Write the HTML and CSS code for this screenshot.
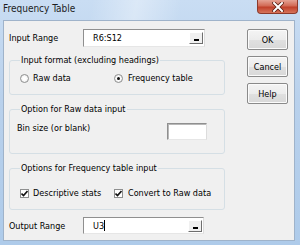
FILE: index.html
```html
<!DOCTYPE html>
<html lang="en">
<head>
    <meta charset="UTF-8">
    <title>Frequency Table</title>
    <link rel="stylesheet" href="styles.css">
</head>
<body>
    <div class="window">
        <div class="titlebar">
            <span class="title">Frequency Table</span>
            <button class="close-btn">
                <svg width="12" height="10" viewBox="0 0 12 10">
                    <path d="M2 1 L10 9 M10 1 L2 9" stroke="#5a1d12" stroke-width="3.6" stroke-linecap="square"/>
                    <path d="M2 1 L10 9 M10 1 L2 9" stroke="#ffffff" stroke-width="2" stroke-linecap="square"/>
                </svg>
            </button>
        </div>

        <div class="client">
            <div class="form">
                <div class="field-row">
                    <span class="field-label">Input Range</span>
                    <div class="ref-box">
                        <span class="ref-text">R6:S12</span>
                        <span class="ref-btn"><span class="ref-btn-bar"></span></span>
                    </div>
                </div>

                <fieldset class="group">
                    <legend>Input format (excluding headings)</legend>
                    <div class="option-row">
                        <label class="option"><span class="radio"></span>Raw data</label>
                        <label class="option"><span class="radio checked"></span>Frequency table</label>
                    </div>
                </fieldset>

                <fieldset class="group group-bin">
                    <legend>Option for Raw data input</legend>
                    <div class="bin-row">
                        <span class="bin-label">Bin size (or blank)</span>
                        <div class="bin-box"></div>
                    </div>
                </fieldset>

                <fieldset class="group group-freq">
                    <legend>Options for Frequency table input</legend>
                    <div class="option-row">
                        <label class="option"><span class="checkbox"><svg width="7" height="7" viewBox="0 0 7 7"><path d="M0.5 3.5 L2.5 5.5 L6.5 1" fill="none" stroke="#111" stroke-width="1.6"/></svg></span>Descriptive stats</label>
                        <label class="option"><span class="checkbox"><svg width="7" height="7" viewBox="0 0 7 7"><path d="M0.5 3.5 L2.5 5.5 L6.5 1" fill="none" stroke="#111" stroke-width="1.6"/></svg></span>Convert to Raw data</label>
                    </div>
                </fieldset>

                <div class="field-row output-row">
                    <span class="field-label">Output Range</span>
                    <div class="ref-box">
                        <span class="ref-text">U3</span><span class="caret"></span>
                        <span class="ref-btn"><span class="ref-btn-bar"></span></span>
                    </div>
                </div>
            </div>

            <div class="side-buttons">
                <button class="cmd">OK</button>
                <button class="cmd">Cancel</button>
                <button class="cmd">Help</button>
            </div>
        </div>
    </div>
</body>
</html>
```

FILE: styles.css
```css
body {
    margin: 0;
    font-family: "DejaVu Sans Condensed", "DejaVu Sans", sans-serif;
    font-size: 9px;
    color: #000000;
    background: #ffffff;
}

.window {
    width: 300px;
    height: 245px;
    box-sizing: border-box;
    padding: 0 5px 4px 3px;
    display: flex;
    flex-direction: column;
    background: linear-gradient(to bottom, #c9ddf3 0%, #b9d1ec 40%, #aecbea 100%);
}

/* title bar */
.titlebar {
    height: 20px;
    display: flex;
    align-items: flex-start;
    margin-right: -3px;
    background: linear-gradient(100deg, rgba(255,255,255,0) 30%, rgba(255,255,255,0.35) 45%, rgba(255,255,255,0) 60%);
}

.title {
    font-size: 10px;
    line-height: 16px;
    color: #1e1e1e;
    padding-top: 1px;
}

.close-btn {
    margin-left: auto;
    width: 41px;
    height: 14px;
    padding: 0;
    border: 1px solid #8c3a2c;
    border-top: none;
    border-radius: 0 0 4px 4px;
    background: linear-gradient(to bottom, #e5a294 0%, #d26a55 45%, #c1402a 55%, #d6745c 100%);
    display: flex;
    align-items: center;
    justify-content: center;
}

/* client area */
.client {
    flex: 1;
    display: flex;
    background-color: #f0f0f0;
    border: 1px solid #9fb3ca;
}

.form {
    width: 216px;
    padding-left: 5px;
}

.field-row {
    display: flex;
    align-items: center;
    margin-top: 8px;
    height: 18px;
}

.field-label {
    width: 74px;
}

.ref-box {
    width: 122px;
    height: 18px;
    box-sizing: border-box;
    display: flex;
    align-items: center;
    background: #ffffff;
    border: 1px solid;
    border-color: #8f8f8f #dcdcdc #e6e6e6 #8f8f8f;
    padding: 0 1px 0 9px;
}

.ref-btn {
    margin-left: auto;
    width: 14px;
    height: 12px;
    box-sizing: border-box;
    background: #f0f0f0;
    border: 1px solid;
    border-color: #ffffff #6e6e6e #6e6e6e #ffffff;
    display: flex;
    justify-content: center;
    align-items: flex-end;
    padding-bottom: 2px;
}

.ref-btn-bar {
    width: 5px;
    height: 2px;
    background: #000000;
}

.caret {
    width: 1px;
    height: 11px;
    background: #000000;
}

.output-row {
    margin-top: 7px;
    height: 17px;
}

.output-row .ref-box {
    width: 121px;
    height: 17px;
}

/* group boxes */
.group {
    margin: 8px 0 0;
    padding: 0 0 10px;
    border: 1px solid #d5dfe5;
    border-radius: 3px;
    min-width: 0;
}

.group legend {
    margin-left: 10px;
    padding: 0 1px;
    line-height: 11px;
}

.group-bin,
.group-freq {
    margin-top: 9px;
}

.option-row {
    display: grid;
    grid-template-columns: 94px auto;
    margin-top: 6px;
    padding-left: 10px;
    height: 12px;
    align-items: center;
}

.group-freq .option-row {
    margin-top: 13px;
}

.option {
    display: flex;
    align-items: center;
    line-height: 12px;
}

.radio {
    width: 9px;
    height: 9px;
    box-sizing: border-box;
    border: 1px solid #8e8f8f;
    border-radius: 50%;
    background: radial-gradient(circle, #ffffff 30%, #e4e4e4 100%);
    margin-right: 4px;
    display: flex;
    align-items: center;
    justify-content: center;
}

.radio.checked::after {
    content: "";
    width: 3px;
    height: 3px;
    border-radius: 50%;
    background: #111111;
}

.option:last-child .radio,
.option:last-child .checkbox {
    margin-right: 5px;
}

.checkbox {
    width: 9px;
    height: 9px;
    box-sizing: border-box;
    border: 1px solid #8e8f8f;
    background: #ffffff;
    margin-right: 4px;
    display: flex;
    align-items: center;
    justify-content: center;
}

.bin-row {
    display: flex;
    align-items: flex-start;
    margin-top: 8px;
    padding-left: 7px;
    padding-bottom: 3px;
}

.bin-label {
    width: 150px;
    line-height: 11px;
}

.bin-box {
    width: 40px;
    height: 17px;
    box-sizing: border-box;
    background: #ffffff;
    border: 1px solid;
    border-color: #8f8f8f #dcdcdc #e6e6e6 #8f8f8f;
    box-shadow: inset 1px 1px 0 #b8b8b8;
}

/* command buttons */
.side-buttons {
    display: flex;
    flex-direction: column;
    gap: 6px;
    margin-left: 22px;
    padding-top: 8px;
}

.cmd {
    width: 41px;
    height: 21px;
    padding: 0;
    font-family: "DejaVu Sans Condensed", "DejaVu Sans", sans-serif;
    font-size: 9px;
    color: #000000;
    border: 1px solid #8a8a8a;
    border-radius: 2px;
    background: linear-gradient(to bottom, #f4f4f4 0%, #ececec 50%, #e0e0e0 51%, #d8d8d8 100%);
    box-shadow: inset 0 0 0 1px #fbfbfb;
    cursor: pointer;
}
```
